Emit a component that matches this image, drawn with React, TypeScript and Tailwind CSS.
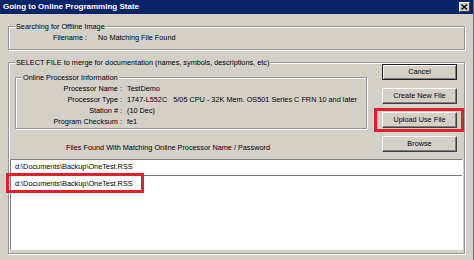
import React from "react";

const Group = ({
  title,
  className,
  children,
}: {
  title: string;
  className?: string;
  children?: React.ReactNode;
}) => {
  return (
    <div
      className={`border border-[#9a9792] shadow-[inset_1px_1px_0_#fff,1px_1px_0_#fff] ${className ?? ""}`}
    >
      <div className="-mt-[6px] ml-[6px] w-fit bg-[#d4d0c8] px-[1px] leading-[11px]">{title}</div>
      {children}
    </div>
  );
};

const Btn = ({ label, isDefault }: { label: string; isDefault?: boolean }) => {
  return (
    <div
      className={
        isDefault
          ? "h-[16px] w-[75px] border border-[#202020] bg-[#d4d0c8] flex items-center justify-center shadow-[inset_1px_1px_0_#fff,inset_-1px_-1px_0_#808080]"
          : "h-[16px] w-[75px] border-t border-l border-b border-r border-t-white border-l-white border-b-[#404040] border-r-[#404040] bg-[#d4d0c8] flex items-center justify-center shadow-[inset_-1px_-1px_0_#808080]"
      }
    >
      {label}
    </div>
  );
};

const Row = ({ label, value }: { label: string; value: string }) => (
  <div className="flex leading-[11px]">
    <div className="w-[106px] text-right">{label}</div>
    <div className="ml-[5px] whitespace-pre">{value}</div>
  </div>
);

export default function App() {
  return (
    <div className="relative w-[474px] h-[260px] overflow-hidden bg-[#d4d0c8] text-[7.3px] text-black font-['Liberation_Sans',Arial,sans-serif] border-r border-r-[#6f6d69]">
      {/* Title bar */}
      <div className="h-[14px] bg-[#0a246a] flex items-center justify-between pl-[3px] pr-[3px]">
        <span className="text-white font-bold text-[8px] leading-none">Going to Online Programming State</span>
        <div className="w-[11px] h-[10px] bg-[#d4d0c8] border-t border-l border-t-white border-l-white border-b border-r border-b-[#404040] border-r-[#404040] flex items-center justify-center">
          <svg width="7" height="6" viewBox="0 0 7 6">
            <path d="M0.5 0.5 L6 5.5 M6 0.5 L0.5 5.5" stroke="#000" strokeWidth="1.4" />
          </svg>
        </div>
      </div>

      <div className="px-[8px]">
        {/* Searching group */}
        <Group title="Searching for Offline Image" className="mt-[12px] h-[24px]">
          <div className="flex leading-[11px] pl-[44px]">
            <span>Filename :</span>
            <span className="ml-[11px]">No Matching File Found</span>
          </div>
        </Group>

        {/* Select file group */}
        <div className="mt-[12px] h-[192px] border border-[#9a9792] shadow-[inset_1px_1px_0_#fff,1px_1px_0_#fff]">
          <div className="flex">
            <div className="flex-1">
              <div className="-mt-[6px] ml-[6px] w-fit bg-[#d4d0c8] px-[1px] leading-[11px]">
                SELECT FILE to merge for documentation (names, symbols, descriptions, etc)
              </div>
              <Group title="Online Processor Information" className="mt-[9px] ml-[6px] w-[352px] pb-[1px]">
                <Row label="Processor Name :" value="TestDemo" />
                <Row label="Processor Type :" value={"1747-L552C   5/05 CPU - 32K Mem. OS501 Series C FRN 10 and later"} />
                <Row label="Station # :" value="(10 Dec)" />
                <Row label="Program Checksum :" value="fe1" />
              </Group>
              <div className="mt-[13px] pl-[57px] leading-[11px]">
                Files Found With Matching Online Processor Name / Password
              </div>
            </div>
            <div className="flex flex-col gap-[8px] pt-[1px] mr-[7px]">
              <Btn label="Cancel" isDefault />
              <Btn label="Create New File" />
              <Btn label="Upload Use File" />
              <Btn label="Browse" />
            </div>
          </div>

          {/* File list */}
          <div className="mt-[6px] mx-[1px] h-[91px] bg-white border-t border-l border-t-[#808080] border-l-[#808080] border-b border-r border-b-white border-r-white flex flex-col">
            <div className="h-[15px] flex items-center pl-[4px]">d:\Documents\Backup\OneTest.RSS</div>
            <div className="h-[1px] bg-[#7a7874]" />
            <div className="pt-[2px] pl-[4px] leading-[11px]">d:\Documents\Backup\OneTest.RSS</div>
          </div>
        </div>
      </div>

      {/* Red annotation boxes */}
      <div className="absolute left-[374px] top-[108px] w-[90px] h-[24px] border-[3px] border-[#e0202a]" />
      <div className="absolute left-[6px] top-[173px] w-[138px] h-[20px] border-[3px] border-[#e0202a]" />
    </div>
  );
}
